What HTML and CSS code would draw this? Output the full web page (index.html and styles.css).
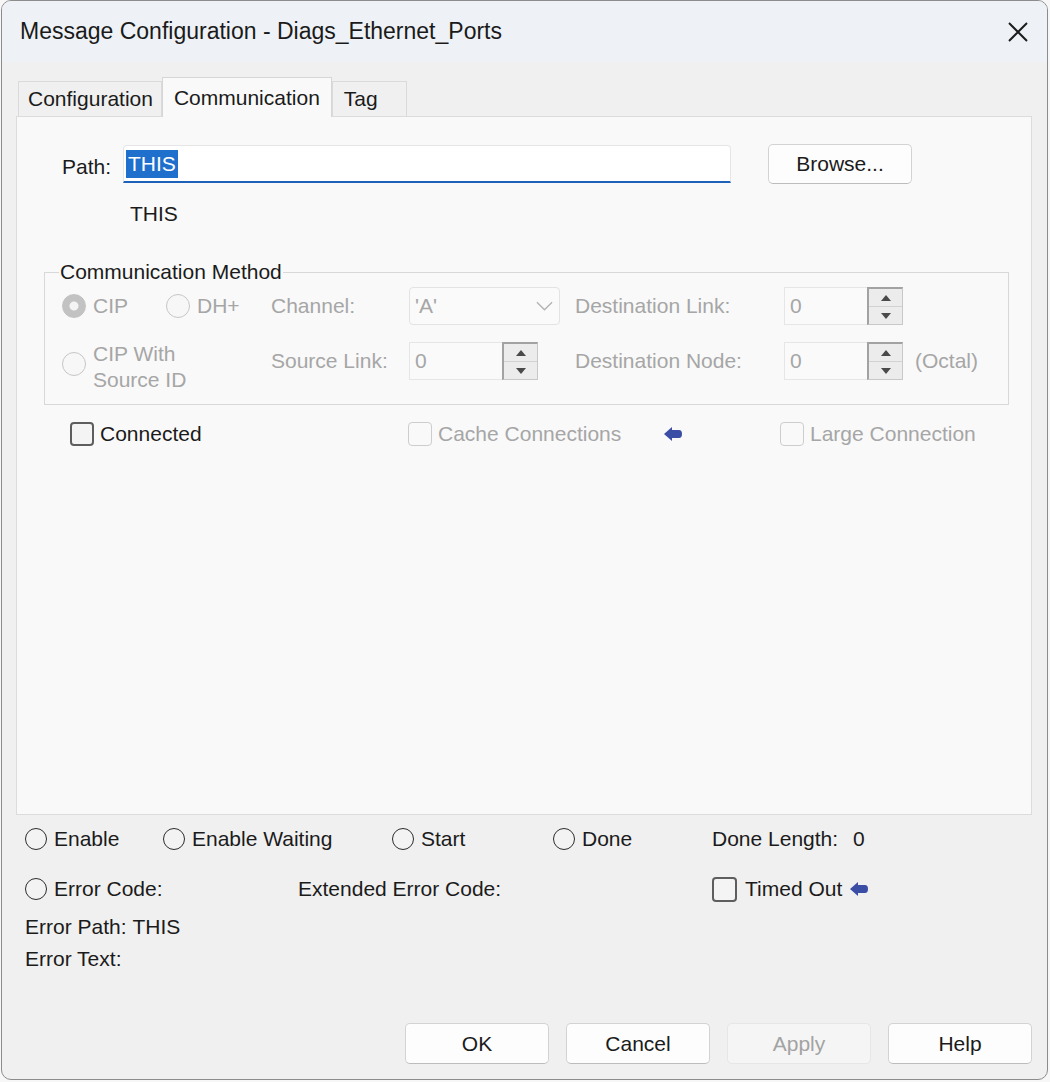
FILE: index.html
```html
<!DOCTYPE html>
<html lang="en">
<head>
<meta charset="UTF-8" />
<title>Message Configuration - Diags_Ethernet_Ports</title>
<link rel="stylesheet" href="styles.css">
</head>
<body>

<div class="window">
  <div class="titlebar">
    <span class="title">Message Configuration - Diags_Ethernet_Ports</span>
    <svg class="close" viewBox="0 0 20 20"><path d="M1 1 L19 19 M19 1 L1 19" stroke="#1c1c1c" stroke-width="2" fill="none"/></svg>
  </div>

  <div class="content">
    <div class="tabs">
      <div class="tab">Configuration</div>
      <div class="tab active">Communication</div>
      <div class="tab tag">Tag</div>
    </div>

    <div class="panel">
      <div class="path-row">
        <span class="path-label">Path:</span>
        <div class="path-input"><span class="sel">THIS</span></div>
        <button class="btn browse">Browse...</button>
      </div>
      <div class="resolved">THIS</div>

      <fieldset class="method">
        <legend>Communication Method</legend>
        <div class="method-row first">
          <span class="opt"><span class="radio on"></span>CIP</span>
          <span class="opt"><span class="radio"></span>DH+</span>
          <span class="dim">Channel:</span>
          <div class="select">'A'<svg viewBox="0 0 18 10"><path d="M1 1 L9 9 L17 1" stroke="#b4b4b4" stroke-width="1.5" fill="none"/></svg></div>
          <span class="dim">Destination Link:</span>
          <div class="spin w119"><span class="spin-val">0</span><span class="spin-btns"><span class="up"></span><span class="down"></span></span></div>
        </div>
        <div class="method-row second">
          <span class="opt wide"><span class="radio"></span><span class="two-line">CIP With<br>Source ID</span></span>
          <span class="dim">Source Link:</span>
          <div class="spin w129"><span class="spin-val">0</span><span class="spin-btns"><span class="up"></span><span class="down"></span></span></div>
          <span class="dim">Destination Node:</span>
          <div class="spin w119"><span class="spin-val">0</span><span class="spin-btns"><span class="up"></span><span class="down"></span></span></div>
          <span class="dim octal">(Octal)</span>
        </div>
      </fieldset>

      <div class="conn-row">
        <span class="check-item"><span class="check"></span>Connected</span>
        <span class="check-item dim"><span class="check off"></span>Cache Connections</span>
        <svg class="arrow" viewBox="0 0 18 14"><path d="M0 7 L8 0 V3 H15 Q18 3 18 7 Q18 11 15 11 H8 V14 Z" fill="#3b4ea6"/></svg>
        <span class="check-item dim"><span class="check off"></span>Large Connection</span>
      </div>
    </div>

    <div class="status">
      <div class="status-row">
        <span class="led-item w138"><span class="led"></span>Enable</span>
        <span class="led-item w229"><span class="led"></span>Enable Waiting</span>
        <span class="led-item w161"><span class="led"></span>Start</span>
        <span class="led-item w159"><span class="led"></span>Done</span>
        <span>Done Length:<span class="num">0</span></span>
      </div>
      <div class="status-row second">
        <span class="led-item w273"><span class="led"></span>Error Code:</span>
        <span class="w414">Extended Error Code:</span>
        <span class="check-item timed"><span class="check"></span>Timed Out</span>
        <svg class="arrow small" viewBox="0 0 18 14"><path d="M0 7 L8 0 V3 H15 Q18 3 18 7 Q18 11 15 11 H8 V14 Z" fill="#3b4ea6"/></svg>
      </div>
      <div class="status-row third">Error Path:<span class="err-path">THIS</span></div>
      <div class="status-row fourth">Error Text:</div>
    </div>

    <div class="actions">
      <button class="btn">OK</button>
      <button class="btn">Cancel</button>
      <button class="btn disabled">Apply</button>
      <button class="btn">Help</button>
    </div>
  </div>
</div>

</body>
</html>
```

FILE: styles.css
```css
* { box-sizing: border-box; }
body {
  margin: 0;
  background: #f7f7f7;
  font-family: "Liberation Sans", Arial, sans-serif;
  font-size: 21px;
  color: #1b1b1b;
}
.window {
  margin-left: 1px;
  width: 1047px;
  height: 1080px;
  border: 1px solid #8c8c8c;
  border-radius: 10px;
  background: #f0f0f0;
  display: flex;
  flex-direction: column;
  overflow: hidden;
}
.titlebar {
  height: 61px;
  flex: none;
  background: #eef2f6;
  display: flex;
  align-items: center;
  justify-content: space-between;
  padding: 0 19px 0 18px;
}
.title { font-size: 23px; color: #1a1a1a; }
.close { width: 20px; height: 20px; }

.content {
  flex: 1;
  display: flex;
  flex-direction: column;
  padding: 0 15px 15px 14px;
}
.tabs {
  display: flex;
  align-items: flex-end;
  height: 39px;
  margin-top: 15px;
  padding-left: 2px;
}
.tab {
  height: 35px;
  line-height: 34px;
  padding: 0 8px 0 9px;
  border: 1px solid #dadada;
  border-bottom: none;
  background: #f0f0f0;
}
.tab.active {
  position: relative;
  height: 40px;
  line-height: 30px;
  padding: 5px 11px 5px 11px;
  margin-bottom: -1px;
  background: #f9f9f9;
  border-color: #d6d6d6;
}
.tab.tag { width: 75px; padding-left: 11px; }

.panel {
  height: 699px;
  flex: none;
  border: 1px solid #dcdcdc;
  background: #f9f9f9;
}
.path-row {
  display: flex;
  align-items: center;
  height: 40px;
  margin-top: 27px;
  padding-left: 45px;
}
.path-label { width: 61px; padding-top: 6px; }
.path-input {
  width: 608px;
  height: 38px;
  background: #fff;
  border: 1px solid #e6e6e6;
  border-bottom: 2px solid #1d62b8;
  border-radius: 4px 4px 0 0;
  display: flex;
  align-items: center;
  padding-left: 2px;
}
.sel {
  background: #1f6fcc;
  color: #fff;
  line-height: 28px;
  padding: 0 2px;
}
.btn {
  width: 144px;
  height: 41px;
  background: #fdfdfd;
  border: 1px solid #d3d3d3;
  border-bottom-color: #bcbcbc;
  border-radius: 5px;
  font: inherit;
  color: #1b1b1b;
  padding: 0;
}
.btn.browse { height: 40px; margin-left: 37px; }
.btn.disabled {
  background: #f5f5f5;
  border-color: #e6e6e6;
  color: #a3a3a3;
}
.resolved {
  margin-top: 15px;
  padding-left: 113px;
  line-height: 30px;
}

.method {
  width: 965px;
  margin: 30px 0 0 27px;
  padding: 0 0 11px 14px;
  border: 1px solid #d8d8d8;
}
.method legend {
  padding: 0 1px;
  line-height: 26px;
}
.method-row {
  display: grid;
  grid-template-columns: 104px 105px 138px 166px 209px 131px auto;
  margin-left: 3px;
}
.method-row.first { height: 38px; margin-top: 2px; align-items: center; }
.method-row.second { margin-top: 17px; align-items: start; }
.method-row.second .dim { line-height: 38px; }
.dim { color: #a6a6a6; }
.opt {
  display: flex;
  align-items: center;
  gap: 7px;
  color: #a6a6a6;
}
.opt.wide { grid-column: span 2; align-items: flex-start; }
.opt.wide .radio { margin-top: 10px; }
.two-line { line-height: 26px; margin-top: -1px; }
.method-row.second > .dim:first-of-type { padding-left: 2px; }
.radio {
  width: 24px;
  height: 24px;
  flex: none;
  border-radius: 50%;
  border: 1.5px solid #c6c6c6;
  background: #f7f7f7;
}
.radio.on {
  border-color: #c2c2c2;
  background: radial-gradient(circle, #f4f4f4 0 4px, #c2c2c2 5px);
}
.select {
  width: 151px;
  height: 38px;
  border: 1px solid #e3e3e3;
  border-radius: 4px;
  background: #fafafa;
  display: flex;
  align-items: center;
  justify-content: space-between;
  padding: 0 6px 0 5px;
  color: #a6a6a6;
}
.select svg { width: 17px; height: 10px; }
.spin {
  display: flex;
  height: 38px;
  border: 1px solid #e6e6e6;
  background: #fafafa;
}
.spin.w119 { width: 119px; }
.spin.w129 { width: 129px; }
.spin-val {
  flex: 1;
  padding-left: 5px;
  line-height: 36px;
  color: #a6a6a6;
}
.spin-btns {
  width: 36px;
  display: flex;
  flex-direction: column;
  margin: -1px -1px -1px 0;
  border: 1px solid #c8c8c8;
  border-left: 2px solid #a2a2a2;
  border-top: 2px solid #a2a2a2;
  background: #ececec;
}
.spin-btns span {
  flex: 1;
  display: flex;
  align-items: center;
  justify-content: center;
}
.spin-btns .down { border-top: 1px solid #d2d2d2; }
.up::before {
  content: "";
  border: 5px solid transparent;
  border-top: 0;
  border-bottom: 6px solid #4a4a4a;
}
.down::before {
  content: "";
  border: 5px solid transparent;
  border-bottom: 0;
  border-top: 6px solid #4a4a4a;
}
.octal { padding-left: 0; }

.conn-row {
  display: grid;
  grid-template-columns: 338px 256px 116px auto;
  align-items: center;
  height: 30px;
  margin-top: 14px;
  padding-left: 53px;
}
.check-item {
  display: flex;
  align-items: center;
  gap: 6px;
}
.check {
  width: 24px;
  height: 24px;
  flex: none;
  border: 2px solid #5e5e5e;
  border-radius: 4px;
  background: #f4f4f4;
}
.check.off { border: 1.5px solid #cdcdcd; background: #f9f9f9; }
.arrow { width: 18px; height: 14px; }

.status { margin-top: 9px; padding-left: 9px; }
.status-row {
  display: flex;
  align-items: center;
  height: 30px;
}
.status-row.second { margin-top: 20px; }
.status-row.third { margin-top: 8px; }
.status-row.fourth { margin-top: 2px; }
.led-item { display: flex; align-items: center; gap: 7px; }
.led {
  width: 22px;
  height: 22px;
  flex: none;
  border-radius: 50%;
  border: 1.5px solid #2c2c2c;
  background: #f3f3f3;
}
.w138 { width: 138px; }
.w229 { width: 229px; }
.w161 { width: 161px; }
.w159 { width: 159px; }
.w273 { width: 273px; }
.w414 { width: 414px; }
.num { margin-left: 15px; }
.timed { gap: 8px; }
.timed .check { width: 25px; height: 25px; }
.arrow.small { margin-left: 8px; }
.err-path { margin-left: 6px; }

.actions {
  margin-top: auto;
  display: flex;
  justify-content: flex-end;
  gap: 17px;
}
```
